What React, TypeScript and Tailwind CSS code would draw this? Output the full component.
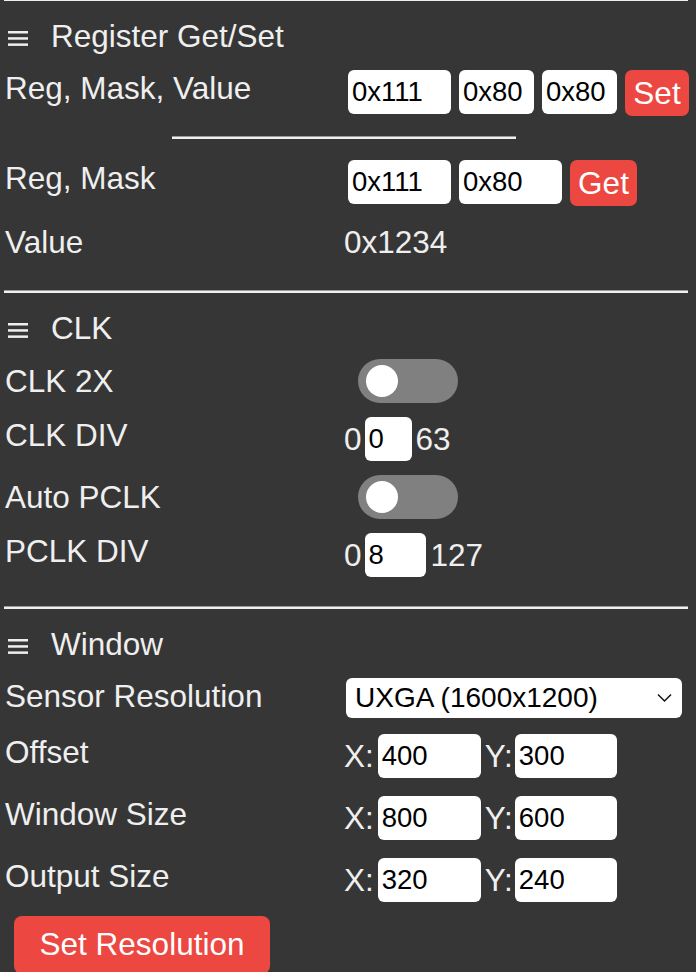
import React from "react";

const Hr = () => (
  <div className="ml-[4px] w-[684px] h-[3px] border-t border-t-[#9a9a9a] bg-[#efefef]" />
);

const MenuIcon = () => (
  <svg width="20" height="15" viewBox="0 0 20 15" className="mt-[4px] shrink-0">
    <rect x="0" y="0" width="20" height="2.5" fill="#efefef" />
    <rect x="0" y="6.2" width="20" height="2.5" fill="#efefef" />
    <rect x="0" y="12.4" width="20" height="2.5" fill="#efefef" />
  </svg>
);

const Heading = ({ title, mt }: { title: string; mt: string }) => (
  <div className={`${mt} h-[36px] flex items-center pl-[8px]`}>
    <MenuIcon />
    <span className="ml-[23px] text-[31.5px] leading-[36px]">{title}</span>
  </div>
);

const Label = ({ children }: { children: React.ReactNode }) => (
  <span className="w-[344px] shrink-0 pl-[5px] text-[31.5px] leading-[36px] whitespace-nowrap">
    {children}
  </span>
);

const Input = ({ value, w }: { value: string; w: string }) => (
  <div
    className={`${w} h-[44px] shrink-0 bg-white rounded-[6px] text-black text-[27.5px] leading-[44px] pl-[4px] overflow-hidden whitespace-nowrap`}
  >
    {value}
  </div>
);

const RedButton = ({ children, w }: { children: React.ReactNode; w: string }) => (
  <div
    className={`${w} h-[46px] shrink-0 bg-[#ec4741] rounded-[7px] text-white text-[31.5px] leading-[46px] text-center`}
  >
    {children}
  </div>
);

const Toggle = () => (
  <div className="ml-[14px] w-[100px] h-[44px] rounded-full bg-[#808080] flex items-center pl-[8px]">
    <div className="w-[32px] h-[32px] rounded-full bg-white" />
  </div>
);

export default function App() {
  return (
    <div className="w-[696px] min-h-[972px] bg-[#363636] text-[#efefef] font-['Liberation_Sans',Arial,sans-serif] overflow-hidden">
      <div className="ml-[4px] w-[684px] h-[1px] bg-[#efefef]" />

      <Heading title="Register Get/Set" mt="mt-[17px]" />

      <div className="mt-[16px] h-[46px] flex items-start">
        <Label>Reg, Mask, Value</Label>
        <div className="ml-[4px] flex items-start gap-[8px]">
          <Input value="0x111" w="w-[103px]" />
          <Input value="0x80" w="w-[75px]" />
          <Input value="0x80" w="w-[75px]" />
          <RedButton w="w-[64px]">Set</RedButton>
        </div>
      </div>

      <div className="mt-[20px] ml-[172px] w-[344px] h-[3px] border-t border-t-[#9a9a9a] bg-[#efefef]" />

      <div className="mt-[21px] h-[46px] flex items-start">
        <Label>Reg, Mask</Label>
        <div className="ml-[4px] flex items-start gap-[8px]">
          <Input value="0x111" w="w-[103px]" />
          <Input value="0x80" w="w-[103px]" />
          <RedButton w="w-[67px]">Get</RedButton>
        </div>
      </div>

      <div className="mt-[18px] h-[36px] flex items-start">
        <Label>Value</Label>
        <span className="text-[31.5px] leading-[36px]">0x1234</span>
      </div>

      <div className="mt-[30px]">
        <Hr />
      </div>

      <Heading title="CLK" mt="mt-[17px]" />

      <div className="mt-[13px] h-[44px] flex items-center">
        <Label>CLK 2X</Label>
        <Toggle />
      </div>

      <div className="mt-[14px] h-[44px] flex items-start">
        <Label>CLK DIV</Label>
        <div className="flex items-center h-[44px]">
          <span className="text-[31.5px] leading-[36px]">0</span>
          <div className="ml-[3px]">
            <Input value="0" w="w-[47px]" />
          </div>
          <span className="ml-[4px] text-[31.5px] leading-[36px]">63</span>
        </div>
      </div>

      <div className="mt-[14px] h-[44px] flex items-center">
        <Label>Auto PCLK</Label>
        <Toggle />
      </div>

      <div className="mt-[14px] h-[44px] flex items-start">
        <Label>PCLK DIV</Label>
        <div className="flex items-center h-[44px]">
          <span className="text-[31.5px] leading-[36px]">0</span>
          <div className="ml-[3px]">
            <Input value="8" w="w-[61px]" />
          </div>
          <span className="ml-[5px] text-[31.5px] leading-[36px]">127</span>
        </div>
      </div>

      <div className="mt-[29px]">
        <Hr />
      </div>

      <Heading title="Window" mt="mt-[17px]" />

      <div className="mt-[16px] h-[40px] flex items-start">
        <Label>Sensor Resolution</Label>
        <div className="ml-[2px] w-[336px] h-[40px] bg-white rounded-[6px] flex items-center justify-between pl-[9px] pr-[10px] text-black">
          <span className="text-[28px] leading-[40px] whitespace-nowrap">UXGA (1600x1200)</span>
          <svg width="15" height="10" viewBox="0 0 15 10">
            <path d="M1 1.5 L7.5 8 L14 1.5" fill="none" stroke="#111" strokeWidth="1.5" />
          </svg>
        </div>
      </div>

      {[
        { label: "Offset", x: "400", y: "300", mt: "mt-[16px]" },
        { label: "Window Size", x: "800", y: "600", mt: "mt-[18px]" },
        { label: "Output Size", x: "320", y: "240", mt: "mt-[18px]" },
      ].map((r) => (
        <div key={r.label} className={`${r.mt} h-[44px] flex items-start`}>
          <Label>{r.label}</Label>
          <div className="flex items-center h-[44px]">
            <span className="text-[31.5px] leading-[36px]">X:</span>
            <div className="ml-[4px]">
              <Input value={r.x} w="w-[103px]" />
            </div>
            <span className="ml-[4px] text-[31.5px] leading-[36px]">Y:</span>
            <div className="ml-[2px]">
              <Input value={r.y} w="w-[102px]" />
            </div>
          </div>
        </div>
      ))}

      <div className="mt-[14px] ml-[14px] w-[256px] h-[58px] bg-[#ec4741] rounded-[8px] text-white text-[31.5px] leading-[56px] text-center">
        Set Resolution
      </div>
    </div>
  );
}
